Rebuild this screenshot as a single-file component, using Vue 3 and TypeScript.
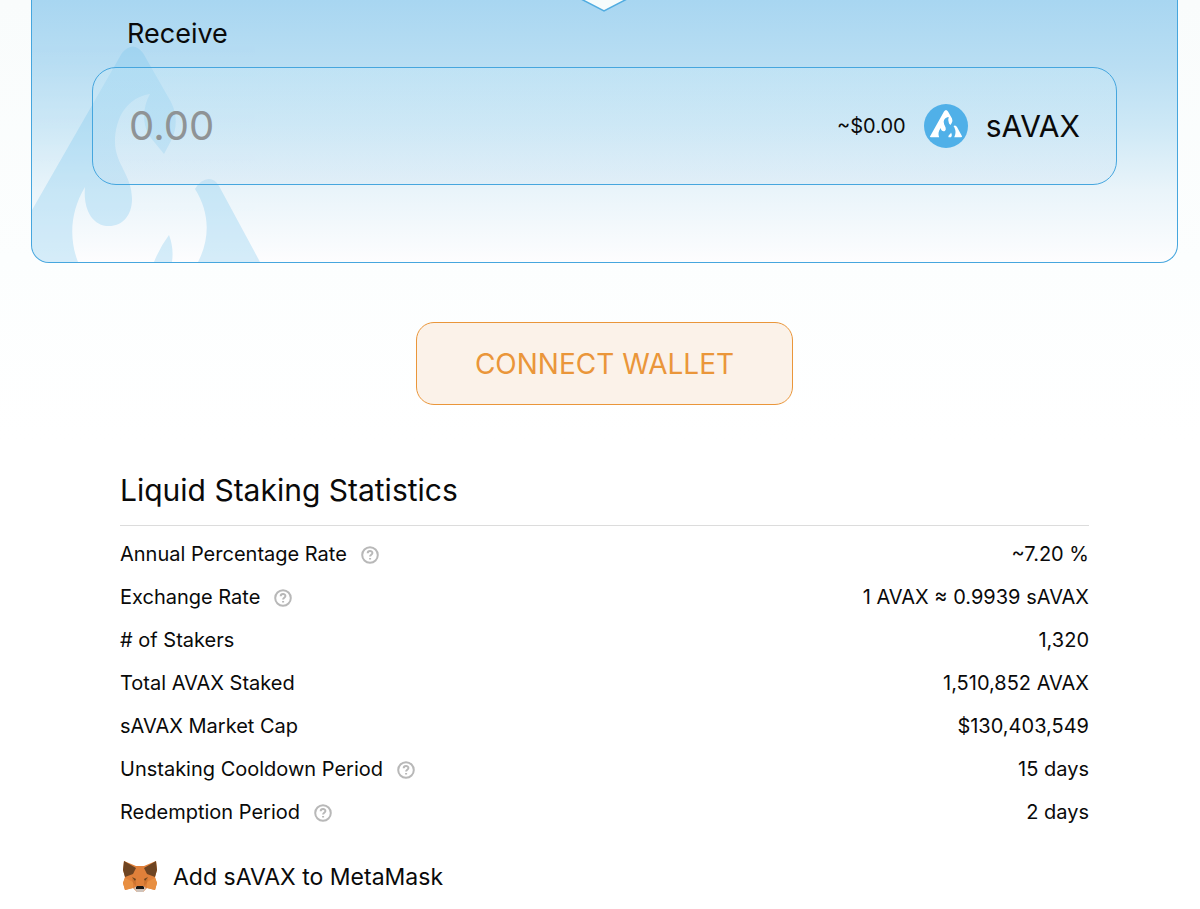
<script setup lang="ts">
import { ref } from 'vue'

interface Stat {
  label: string
  value: string
  help?: boolean
}

const amount = ref('')

const stats: Stat[] = [
  { label: 'Annual Percentage Rate', value: '~7.20 %', help: true },
  { label: 'Exchange Rate', value: '1 AVAX ≈ 0.9939 sAVAX', help: true },
  { label: '# of Stakers', value: '1,320' },
  { label: 'Total AVAX Staked', value: '1,510,852 AVAX' },
  { label: 'sAVAX Market Cap', value: '$130,403,549' },
  { label: 'Unstaking Cooldown Period', value: '15 days', help: true },
  { label: 'Redemption Period', value: '2 days', help: true },
]
</script>

<template>
  <main class="page">
    <section class="card">
      <svg class="watermark" viewBox="32 0 240 262" aria-hidden="true">
        <path
          d="M32 210 L122 53 Q133 40 143 53 L171 102 Q180 120 172 139 L164 154 L151 138 C142 126 142 108 150 94 C128 97 115 117 115 142 C115 164 132 175 132 199 C132 216 122 226 109 226 C92 226 83 209 85 187 C70 212 69 239 78 262 L32 262 Z M195 189 Q201 179 209 179 Q215 179 219 186 L260 262 L198 262 C211 237 209 211 195 189 Z M154 262 Q160 247 169 235 Q174 248 172 262 Z"
        />
      </svg>
      <svg class="chevron" viewBox="0 0 48 12" aria-hidden="true">
        <path d="M1 -1 L24 11 L47 -1" />
      </svg>
      <label class="title" for="receive">Receive</label>
      <div class="field">
        <input id="receive" v-model="amount" type="text" placeholder="0.00" />
        <span class="usd">~$0.00</span>
        <svg class="token" viewBox="0 0 44 44" aria-hidden="true">
          <circle cx="22" cy="22" r="22" fill="#50b0e8" />
          <path
            fill="#fff"
            d="M6 32.5 L20 7.5 Q22 4.5 24 7.5 L28 14.5 Q29 17 27.700 19 L26.500 21 L25 19.500 Q23.500 16.500 24.700 13 C21 13.500 19.500 16 19.800 18.500 C20 21.500 22 22.500 21.800 25.200 C21.500 28 17.200 28.200 16.700 24 C14.200 27.500 14 30 15.200 33.300 L7 33.300 Q5.500 33.300 6 32.500 Z M29.500 22 Q31.500 20.500 33 23 L38 32.300 Q38.200 33.300 37 33.300 L30.200 33.300 C32.300 29 31.800 25.500 29.500 22 Z M24.500 33.300 C24 31 26.500 30.500 27 28.500 C28.200 30.500 28 32 27 33.300 Z"
          />
        </svg>
        <span class="symbol">sAVAX</span>
      </div>
    </section>

    <button class="connect" type="button">CONNECT WALLET</button>

    <section class="stats">
      <h2>Liquid Staking Statistics</h2>
      <table>
        <tbody>
          <tr v-for="stat in stats" :key="stat.label">
            <th scope="row">
              <span class="label">
                {{ stat.label }}
                <svg v-if="stat.help" class="help" viewBox="0 0 18 18" aria-hidden="true">
                  <circle cx="9" cy="9" r="7.800" />
                  <path d="M6.700 7.200 C6.700 4.300 11.400 4.300 11.400 7 C11.400 8.800 9.100 8.800 9.100 10.500 M9.100 11.900 V13.500" />
                </svg>
              </span>
            </th>
            <td>{{ stat.value }}</td>
          </tr>
        </tbody>
      </table>
      <button class="metamask" type="button">
        <svg class="fox" viewBox="0 0 36 32" aria-hidden="true">
          <path fill="#e0803a" d="M2 0 L14 5 H22 L34 0 L35 9 L33 16 L35 22 L33 29 L25 27 L21 31 H15 L11 27 L3 29 L1 22 L3 16 L1 9 Z" />
          <path fill="#e88f42" d="M1 22 L3 17 L11 21 L11 27 L3 29 Z M35 22 L33 17 L25 21 L25 27 L33 29 Z" />
          <path fill="#cf7430" d="M10 17 L14 20 L14 25 L11 22 Z M26 17 L22 20 L22 25 L25 22 Z" />
          <path fill="#6e4422" d="M2 0 L14 7 L11 13 L3 16 L1 9 Z M34 0 L22 7 L25 13 L33 16 L35 9 Z" />
          <path fill="#69431f" d="M10 16 L14 18 L13 20 Z M26 16 L22 18 L23 20 Z" />
          <path fill="#cfc3bb" d="M12 27 L15 25 H21 L24 27 L21 31 H15 Z" />
          <path fill="#1b1614" d="M14 26 L15 25 H21 L22 26 V28 H14 Z" />
        </svg>
        Add sAVAX to MetaMask
      </button>
    </section>
  </main>
</template>

<style>
body {
  margin: 0;
  background: linear-gradient(#f9fcfc, #fcfefe 260px, #ffffff 440px) no-repeat #ffffff;
}
</style>

<style scoped>
.page {
  display: flex;
  flex-direction: column;
  padding: 0 22px 8px 31px;
  font-family: Inter, "Liberation Sans", sans-serif;
  color: #0a0a0a;
}

.card {
  position: relative;
  display: flex;
  flex-direction: column;
  padding: 16px 60px 77px;
  border: 1px solid #46a6de;
  border-top: 0;
  border-radius: 0 0 18px 18px;
  background: linear-gradient(#a8d6f1, #b9def3 66px, #cde8f6 125px, #e9f4fa 190px, #fdfdfe 262px);
  overflow: hidden;
}

.watermark {
  position: absolute;
  left: 0;
  bottom: 0;
  width: 240px;
  height: 262px;
  fill: #70c0ec;
  opacity: 0.28;
}

.chevron {
  position: absolute;
  top: 0;
  left: 50%;
  width: 48px;
  height: 12px;
  margin-left: -25px;
  fill: #f6fcfc;
  stroke: #50ace0;
  stroke-width: 1.5;
}

.title {
  position: relative;
  align-self: flex-start;
  margin: 0 0 15px 35px;
  font-size: 27px;
  line-height: 36px;
}

.field {
  position: relative;
  display: flex;
  align-items: center;
  box-sizing: border-box;
  min-height: 118px;
  padding: 0 36px;
  border: 1px solid #46a6de;
  border-radius: 24px;
  background: linear-gradient(rgba(205, 236, 248, 0.3), rgba(205, 225, 242, 0.25));
}

.field input {
  flex: 1;
  min-width: 0;
  padding: 0;
  border: 0;
  outline: 0;
  background: transparent;
  font: inherit;
  font-size: 40px;
  line-height: 48px;
  color: #0a0a0a;
}

.field input::placeholder {
  color: #8f9395;
  opacity: 1;
}

.usd {
  font-size: 20px;
}

.token {
  width: 44px;
  height: 44px;
  margin: 0 18px;
}

.symbol {
  font-size: 30px;
}

.connect {
  align-self: center;
  margin-top: 59px;
  padding: 23px 58px 21px;
  border: 1px solid #ea963a;
  border-radius: 18px;
  background: #fbf2e9;
  font: inherit;
  font-size: 28px;
  line-height: 37px;
  color: #ea963a;
}

.stats {
  display: flex;
  flex-direction: column;
  margin: 65px 89px 0;
}

h2 {
  margin: 0 0 6px;
  padding-bottom: 15px;
  border-bottom: 1px solid #dcdcdc;
  font-size: 30px;
  font-weight: 400;
  line-height: 40px;
}

table {
  width: 100%;
  border-collapse: collapse;
  font-size: 20px;
}

th,
td {
  height: 43px;
  padding: 0;
  font-weight: 400;
}

th {
  text-align: left;
}

td {
  text-align: right;
}

.label {
  display: inline-flex;
  align-items: center;
  gap: 14px;
}

.help {
  width: 18px;
  height: 18px;
  margin-top: 2px;
  fill: none;
  stroke: #b8b8b8;
  stroke-width: 2;
}

.metamask {
  display: flex;
  align-items: center;
  align-self: flex-start;
  gap: 15px;
  margin-top: 24px;
  padding: 0 0 0 2px;
  border: 0;
  background: transparent;
  font: inherit;
  font-size: 23px;
  line-height: 40px;
  color: #0a0a0a;
}

.fox {
  width: 36px;
  height: 32px;
}
</style>
